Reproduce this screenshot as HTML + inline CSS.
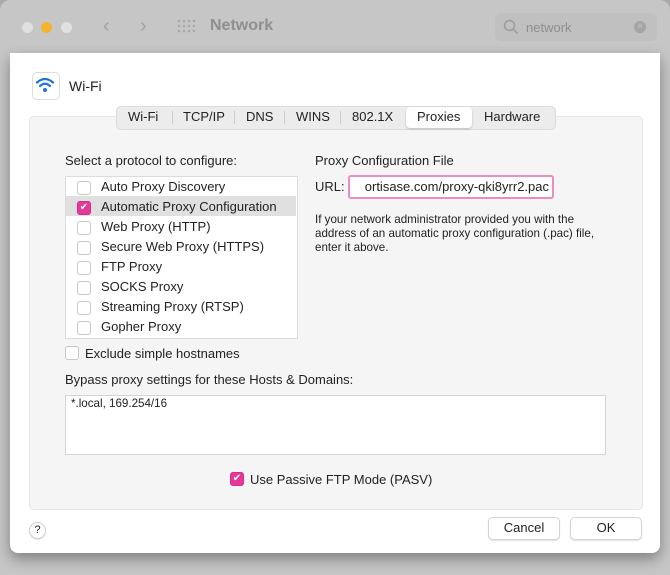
<!DOCTYPE html><html><head><style>
body{margin:0;width:670px;height:575px;background:#a9a9a9;font-family:"Liberation Sans",sans-serif;color:#222;position:relative;overflow:hidden}
.a{position:absolute}
.win{left:0;top:0;width:670px;height:575px;background:#c6c6c6;border-radius:10px 10px 0 0}
.sheet{left:10px;top:53px;width:650px;height:500px;background:#fff;border-radius:0 0 8px 8px;box-shadow:0 6px 14px rgba(0,0,0,.35)}
.panel{left:29px;top:116px;width:612px;height:392px;background:#f5f5f5;border:1px solid #e6e6e6;border-radius:5px}
.t{font-size:13px;white-space:nowrap}
.cb{width:12px;height:12px;border:1px solid #c8c8c8;border-radius:3px;background:#fff}
.pk{background:#e5399a;border-color:#d02f89;color:#fff;font-size:10px;line-height:12px;text-align:center}
.btn{background:#fff;border:1px solid #d4d4d4;border-radius:5px;box-shadow:0 1px 1px rgba(0,0,0,.12);font-size:13px;text-align:center;line-height:20px}
</style></head><body>
<div class="a win"></div>
<div class="a" style="left:22px;top:22px;width:11px;height:11px;border-radius:50%;background:#e0e0e0"></div>
<div class="a" style="left:41px;top:22px;width:11px;height:11px;border-radius:50%;background:#f2b52d"></div>
<div class="a" style="left:61px;top:22px;width:11px;height:11px;border-radius:50%;background:#e0e0e0"></div>
<div class="a t" style="left:103px;top:15px;font-size:20px;color:#a3a3a3">&#x2039;</div>
<div class="a t" style="left:140px;top:15px;font-size:20px;color:#a3a3a3">&#x203A;</div>
<svg class="a" style="left:177px;top:19px" width="18" height="14"><g fill="#a8a8a8"><circle cx="2" cy="2" r="1.3"/><circle cx="7" cy="2" r="1.3"/><circle cx="12" cy="2" r="1.3"/><circle cx="17" cy="2" r="1.3"/><circle cx="2" cy="7" r="1.3"/><circle cx="7" cy="7" r="1.3"/><circle cx="12" cy="7" r="1.3"/><circle cx="17" cy="7" r="1.3"/><circle cx="2" cy="12" r="1.3"/><circle cx="7" cy="12" r="1.3"/><circle cx="12" cy="12" r="1.3"/><circle cx="17" cy="12" r="1.3"/></g></svg>
<div class="a t" style="left:210px;top:17px;font-size:16px;font-weight:bold;color:#8f8f8f">Network</div>
<div class="a" style="left:495px;top:13px;width:162px;height:28px;background:#c0c0c0;border-radius:6px"></div>
<svg class="a" style="left:503px;top:19px" width="16" height="16"><circle cx="6.5" cy="6.5" r="5" fill="none" stroke="#9a9a9a" stroke-width="1.4"/><line x1="10" y1="10" x2="14.5" y2="14.5" stroke="#9a9a9a" stroke-width="1.5"/></svg>
<div class="a t" style="left:526px;top:20px;color:#8f8f8f">network</div>
<div class="a" style="left:634px;top:21px;width:12px;height:12px;border-radius:50%;background:#a5a5a5;color:#c6c6c6;font-size:10px;line-height:12px;text-align:center">×</div>
<div class="a sheet"></div>
<div class="a" style="left:32px;top:72px;width:26px;height:26px;border:1px solid #ddd;border-radius:5px;background:#fff"></div>
<svg class="a" style="left:35px;top:76px" width="20" height="18"><g fill="none" stroke="#1e73d8" stroke-width="2.2" stroke-linecap="round"><path d="M2 6.5Q10 -0.5 18 6.5"/><path d="M5 10Q10 5.5 15 10"/></g><circle cx="10" cy="14" r="2" fill="#1e73d8"/></svg>
<div class="a t" style="left:69px;top:78px;font-size:14px">Wi-Fi</div>
<div class="a panel"></div>
<div class="a" style="left:116px;top:106px;width:438px;height:22px;background:#ececec;border:1px solid #dcdcdc;border-radius:5px"></div>
<div class="a" style="left:406px;top:107px;width:66px;height:21px;background:#fff;border-radius:4px;box-shadow:0 1px 2px rgba(0,0,0,.2)"></div>
<div class="a t" style="top:109px;left:128px">Wi-Fi</div>
<div class="a t" style="top:109px;left:183px">TCP/IP</div>
<div class="a t" style="top:109px;left:246px">DNS</div>
<div class="a t" style="top:109px;left:296px">WINS</div>
<div class="a t" style="top:109px;left:352px">802.1X</div>
<div class="a t" style="top:109px;left:417px">Proxies</div>
<div class="a t" style="top:109px;left:484px">Hardware</div>
<div class="a" style="left:172px;top:111px;width:1px;height:13px;background:#ccc"></div>
<div class="a" style="left:234px;top:111px;width:1px;height:13px;background:#ccc"></div>
<div class="a" style="left:284px;top:111px;width:1px;height:13px;background:#ccc"></div>
<div class="a" style="left:340px;top:111px;width:1px;height:13px;background:#ccc"></div>
<div class="a t" style="left:65px;top:153px">Select a protocol to configure:</div>
<div class="a" style="left:65px;top:176px;width:231px;height:161px;background:#fff;border:1px solid #dcdcdc"></div>
<div class="a" style="left:66px;top:196px;width:230px;height:20px;background:#e0e0e0"></div>
<div class="a cb" style="left:77px;top:181px"></div><div class="a t" style="left:101px;top:179px">Auto Proxy Discovery</div>
<div class="a cb pk" style="left:77px;top:201px">✔</div><div class="a t" style="left:101px;top:199px">Automatic Proxy Configuration</div>
<div class="a cb" style="left:77px;top:221px"></div><div class="a t" style="left:101px;top:219px">Web Proxy (HTTP)</div>
<div class="a cb" style="left:77px;top:241px"></div><div class="a t" style="left:101px;top:239px">Secure Web Proxy (HTTPS)</div>
<div class="a cb" style="left:77px;top:261px"></div><div class="a t" style="left:101px;top:259px">FTP Proxy</div>
<div class="a cb" style="left:77px;top:281px"></div><div class="a t" style="left:101px;top:279px">SOCKS Proxy</div>
<div class="a cb" style="left:77px;top:301px"></div><div class="a t" style="left:101px;top:299px">Streaming Proxy (RTSP)</div>
<div class="a cb" style="left:77px;top:321px"></div><div class="a t" style="left:101px;top:319px">Gopher Proxy</div>
<div class="a cb" style="left:65px;top:346px"></div><div class="a t" style="left:85px;top:346px">Exclude simple hostnames</div>
<div class="a t" style="left:315px;top:153px">Proxy Configuration File</div>
<div class="a t" style="left:315px;top:179px">URL:</div>
<div class="a" style="left:348px;top:175px;width:202px;height:20px;background:#fff;border:2px solid #ea8dc0;border-radius:3px;overflow:hidden"><div class="t" style="position:absolute;right:3px;top:2px">ortisase.com/proxy-qki8yrr2.pac</div></div>
<div class="a" style="left:315px;top:213px;font-size:11.6px;line-height:14px;width:285px">If your network administrator provided you with the address of an automatic proxy configuration (.pac) file, enter it above.</div>
<div class="a t" style="left:65px;top:372px">Bypass proxy settings for these Hosts &amp; Domains:</div>
<div class="a" style="left:65px;top:395px;width:539px;height:58px;background:#fff;border:1px solid #d4d4d4"></div>
<div class="a" style="left:71px;top:397px;font-size:11.6px">*.local, 169.254/16</div>
<div class="a cb pk" style="left:230px;top:472px">✔</div><div class="a t" style="left:250px;top:472px">Use Passive FTP Mode (PASV)</div>
<div class="a" style="left:29px;top:522px;width:15px;height:15px;border:1px solid #d0d0d0;border-radius:50%;background:#fff;font-size:11px;text-align:center;line-height:15px;box-shadow:0 1px 1px rgba(0,0,0,.1)">?</div>
<div class="a btn" style="left:488px;top:517px;width:70px;height:21px">Cancel</div>
<div class="a btn" style="left:570px;top:517px;width:70px;height:21px">OK</div>
</body></html>
